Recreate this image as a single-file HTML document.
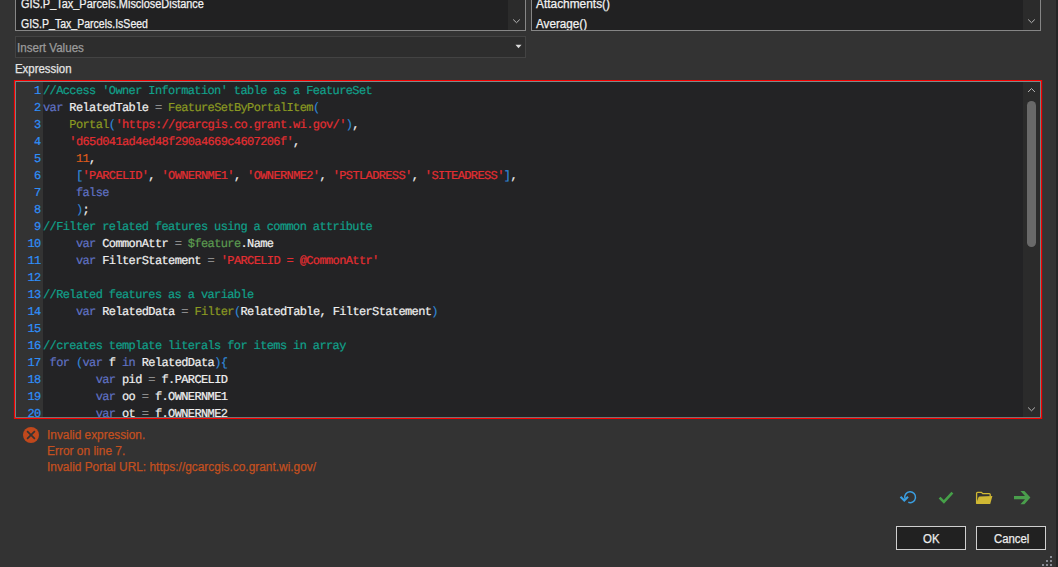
<!DOCTYPE html>
<html lang="en">
<head>
<meta charset="utf-8">
<title>Expression Builder</title>
<style>
*{box-sizing:border-box;margin:0;padding:0}
html,body{width:1058px;height:567px;overflow:hidden;background:#333333}
body{position:relative;font-family:"Liberation Sans",sans-serif;font-size:12px;color:#e6e6e6}
.abs{position:absolute}
.list{position:absolute;top:-12px;height:43px;background:#212122;border:1px solid #868686;overflow:hidden}
.list .sb{position:absolute;top:0;bottom:0;right:0;width:17px;background:#2b2b2b}
.li{position:absolute;left:5px;white-space:nowrap;color:#f2f2f2;font-size:12px;line-height:20px;height:20px;transform-origin:0 0}
.t{position:absolute;white-space:nowrap;font-size:12px;line-height:16px;height:16px;transform-origin:0 0}
.bt{top:531px;color:#ececec}
.u{position:relative;top:-1px}
.li,.t{-webkit-text-stroke:0.25px currentColor}
.cl,.ln{-webkit-text-stroke:0.2px currentColor}
/*FIT*/
#li1{left:5.16px;transform:scaleX(0.9109)}
#li2{left:5.17px;transform:scaleX(0.8767)}
#li3{left:4.11px;transform:scaleX(0.9907)}
#li4{left:4.09px;transform:scaleX(0.9743)}
#tins{left:17.05px;transform:scaleX(0.9673)}
#texp{left:14.78px;transform:scaleX(0.9522)}
#e1{left:47.14px;transform:scaleX(0.9883)}
#e2{left:47.26px;transform:scaleX(0.9953)}
#e3{left:47.12px;transform:scaleX(0.9913)}
#bok{left:922.68px;transform:scaleX(0.9530)}
#bcan{left:993.50px;transform:scaleX(0.9450)}
/*ENDFIT*/
#ins{left:15px;top:36px;width:511px;height:22px;background:#2d2d2d;border:1px solid #434343}
#edred{left:14px;top:80px;width:1028px;height:339px;background:#f40000}
#edgray{left:15px;top:81px;width:1026px;height:337px;background:#7d8a8a}
#ed{left:16px;top:82px;width:1024px;height:335px;background:#232325;overflow:hidden}
#gut{left:0;top:0;width:27px;height:335px;background:#333333}
#vsb{left:1007px;top:0;width:17px;height:335px;background:#2b2b2b}
#thumb{left:4px;top:19px;width:9px;height:146px;border-radius:4.5px;background:#696969}
.ln,.cl{position:absolute;white-space:pre;font-family:"Liberation Mono",monospace;font-size:12px;letter-spacing:-0.62px;line-height:17px;height:17px;text-rendering:geometricPrecision}
.ln{left:0;width:24.7px;text-align:right;color:#2f8ffa}
.cl{left:27px;color:#f0f0f0}
.c{color:#11a08a}.k{color:#6072c4}.f{color:#8b9a22}.s{color:#e42e32}.p{color:#3088d8}.o{color:#8c8c8c}.n{color:#dc5a1c}.g{color:#5c9c50}.w{color:#f0f0f0}
.btn{position:absolute;top:526px;width:70px;height:24px;background:#212121;border:1px solid #cfcfcf;color:#e8e8e8;text-align:center;line-height:22px;font-size:12.5px}
.err{color:#c4501f}
</style>
</head>
<body>
<!-- top lists -->
<div class="list" style="left:15px;width:511px">
  <div class="li" id="li1" style="top:5px">GIS.P<span class="u">_</span>Tax<span class="u">_</span>Parcels.MiscloseDistance</div>
  <div class="li" id="li2" style="top:25px">GIS.P<span class="u">_</span>Tax<span class="u">_</span>Parcels.IsSeed</div>
  <div class="sb"></div>
  <svg class="abs" style="left:496px;top:29px" width="9" height="7" viewBox="0 0 9 7"><path d="M1.2 1.5 L4.5 4.7 L7.8 1.5" fill="none" stroke="#b8b8b8" stroke-width="1"/></svg>
</div>
<div class="list" style="left:531px;width:510px">
  <div class="li" id="li3" style="top:5px">Attachments()</div>
  <div class="li" id="li4" style="top:25px">Average()</div>
  <div class="sb"></div>
  <svg class="abs" style="left:495px;top:29px" width="9" height="7" viewBox="0 0 9 7"><path d="M1.2 1.5 L4.5 4.7 L7.8 1.5" fill="none" stroke="#b8b8b8" stroke-width="1"/></svg>
</div>

<!-- insert values -->
<div id="ins" class="abs"></div>
<div class="t" id="tins" style="top:40px;color:#9b9b9b">Insert Values</div>
<svg class="abs" style="left:515px;top:44px" width="7" height="5" viewBox="0 0 7 5"><path d="M0.5 0.7 H6.5 L3.5 4.2 Z" fill="#dcdcdc"/></svg>

<div class="t" id="texp" style="top:61px;color:#e4e4e4">Expression</div>

<!-- editor -->
<svg class="abs" style="left:10px;top:76px" width="1038" height="348" viewBox="10 76 1038 348">
  <path fill="#f80000" fill-rule="evenodd" d="M13.9 79.9 H1042.2 V419.1 H13.9 Z M15.1 81.1 V417.75 H1040.9 V81.1 Z"/>
  <path fill="#7d8a8a" fill-rule="evenodd" d="M15.1 81.1 H1040.9 V417.75 H15.1 Z M16.1 82.1 V416.8 H1039.9 V82.1 Z"/>
</svg>
<div id="ed" class="abs">
  <div id="gut" class="abs"></div>
  <div id="code">
<div class="ln" style="top:1px">1</div>
<div class="cl" style="top:1px"><span class="c">//Access 'Owner Information' table as a FeatureSet</span></div>
<div class="ln" style="top:18px">2</div>
<div class="cl" style="top:18px"><span class="k">var</span> RelatedTable <span class="o">=</span> <span class="f">FeatureSetByPortalItem</span><span class="p">(</span></div>
<div class="ln" style="top:35px">3</div>
<div class="cl" style="top:35px">    <span class="f">Portal</span><span class="p">(</span><span class="s">'https://gcarcgis.co.grant.wi.gov/'</span><span class="p">)</span>,</div>
<div class="ln" style="top:52px">4</div>
<div class="cl" style="top:52px">    <span class="s">'d65d041ad4ed48f290a4669c4607206f'</span>,</div>
<div class="ln" style="top:69px">5</div>
<div class="cl" style="top:69px">     <span class="n">11</span>,</div>
<div class="ln" style="top:86px">6</div>
<div class="cl" style="top:86px">     <span class="p">[</span><span class="s">'PARCELID'</span>, <span class="s">'OWNERNME1'</span>, <span class="s">'OWNERNME2'</span>, <span class="s">'PSTLADRESS'</span>, <span class="s">'SITEADRESS'</span><span class="p">]</span>,</div>
<div class="ln" style="top:103px">7</div>
<div class="cl" style="top:103px">     <span class="k">false</span></div>
<div class="ln" style="top:120px">8</div>
<div class="cl" style="top:120px">     <span class="p">)</span>;</div>
<div class="ln" style="top:137px">9</div>
<div class="cl" style="top:137px"><span class="c">//Filter related features using a common attribute</span></div>
<div class="ln" style="top:154px">10</div>
<div class="cl" style="top:154px">     <span class="k">var</span> CommonAttr <span class="o">=</span> <span class="g">$feature</span>.Name</div>
<div class="ln" style="top:171px">11</div>
<div class="cl" style="top:171px">     <span class="k">var</span> FilterStatement <span class="o">=</span> <span class="s">'PARCELID = @CommonAttr'</span></div>
<div class="ln" style="top:188px">12</div>
<div class="cl" style="top:188px"></div>
<div class="ln" style="top:205px">13</div>
<div class="cl" style="top:205px"><span class="c">//Related features as a variable</span></div>
<div class="ln" style="top:222px">14</div>
<div class="cl" style="top:222px">     <span class="k">var</span> RelatedData <span class="o">=</span> <span class="f">Filter</span><span class="p">(</span>RelatedTable, FilterStatement<span class="p">)</span></div>
<div class="ln" style="top:239px">15</div>
<div class="cl" style="top:239px"></div>
<div class="ln" style="top:256px">16</div>
<div class="cl" style="top:256px"><span class="c">//creates template literals for items in array</span></div>
<div class="ln" style="top:273px">17</div>
<div class="cl" style="top:273px"> <span class="k">for</span> <span class="p">(</span><span class="k">var</span> f <span class="k">in</span> RelatedData<span class="p">){</span></div>
<div class="ln" style="top:290px">18</div>
<div class="cl" style="top:290px">        <span class="k">var</span> pid <span class="o">=</span> f.PARCELID</div>
<div class="ln" style="top:307px">19</div>
<div class="cl" style="top:307px">        <span class="k">var</span> oo <span class="o">=</span> f.OWNERNME1</div>
<div class="ln" style="top:324px">20</div>
<div class="cl" style="top:324px">        <span class="k">var</span> ot <span class="o">=</span> f.OWNERNME2</div>
</div><!--/code-->
  <div id="vsb" class="abs">
    <svg class="abs" style="left:4px;top:5px" width="9" height="7" viewBox="0 0 9 7"><path d="M1.1 5.0 L4.5 1.5 L7.9 5.0" fill="none" stroke="#b8b8b8" stroke-width="1"/></svg>
    <div id="thumb" class="abs"></div>
    <svg class="abs" style="left:4px;top:324px" width="9" height="7" viewBox="0 0 9 7"><path d="M1.1 1.5 L4.5 4.8 L7.9 1.5" fill="none" stroke="#b8b8b8" stroke-width="1"/></svg>
  </div>
</div>

<!-- error -->
<svg class="abs" style="left:22px;top:426px" width="18" height="18" viewBox="0 0 18 18"><circle cx="9" cy="9" r="8" fill="#c0481c"/><path d="M5.1 5.1 L12.9 12.9 M12.9 5.1 L5.1 12.9" stroke="#333333" stroke-width="1.7" fill="none"/></svg>
<div class="t err" id="e1" style="top:427px">Invalid expression.</div>
<div class="t err" id="e2" style="top:443px">Error on line 7.</div>
<div class="t err" id="e3" style="top:459px">Invalid Portal URL: https://gcarcgis.co.grant.wi.gov/</div>

<!-- toolbar icons -->
<svg class="abs" style="left:890px;top:480px" width="160" height="36" viewBox="890 480 160 36">
  <g fill="none" stroke="#3a9fe2" stroke-width="1.5">
    <path d="M904.9 498.6 A5.4 5.4 0 1 1 908.3 502.3"/>
    <path d="M900.5 496.7 L904.3 500.5 L908.0 496.7" stroke-width="2.1"/>
  </g>
  <path d="M939.6 497.6 L943.9 501.9 L952.4 492.6" fill="none" stroke="#46a049" stroke-width="2.6"/>
  <path d="M976.6 503.4 V493.3 Q976.6 492.3 977.6 492.3 H981.4 L982.8 493.7 H989.3 Q990.2 493.7 990.2 494.6 V496.2" fill="none" stroke="#d0b833" stroke-width="1.3"/>
  <path d="M978.5 497.2 Q978.7 496.5 979.6 496.4 L992.4 495.9 L990.2 504.1 L976.0 504.1 Z" fill="#d0b833"/>
  <path d="M1020.4 490.9 H1024.4 L1030.4 497.6 L1024.4 504.2 H1020.4 L1025 499.2 H1014 V496 H1025 Z" fill="#4a9e4c"/>
</svg>
<!-- resize grip -->
<svg class="abs" style="left:1040px;top:554px" width="14" height="13" viewBox="1040 554 14 13" fill="#888b94">
  <rect x="1050" y="556" width="2" height="2"/>
  <rect x="1046" y="560" width="2" height="2"/><rect x="1050" y="560" width="2" height="2"/>
  <rect x="1042" y="564" width="2" height="2"/><rect x="1046" y="564" width="2" height="2"/><rect x="1050" y="564" width="2" height="2"/>
</svg>
<!-- buttons -->
<div class="btn" style="left:896px"></div><div class="t bt" id="bok">OK</div>
<div class="btn" style="left:976px"></div><div class="t bt" id="bcan">Cancel</div>

<div class="abs" style="left:1056px;top:0;width:2px;height:567px;background:#252526"></div>
</body>
</html>
